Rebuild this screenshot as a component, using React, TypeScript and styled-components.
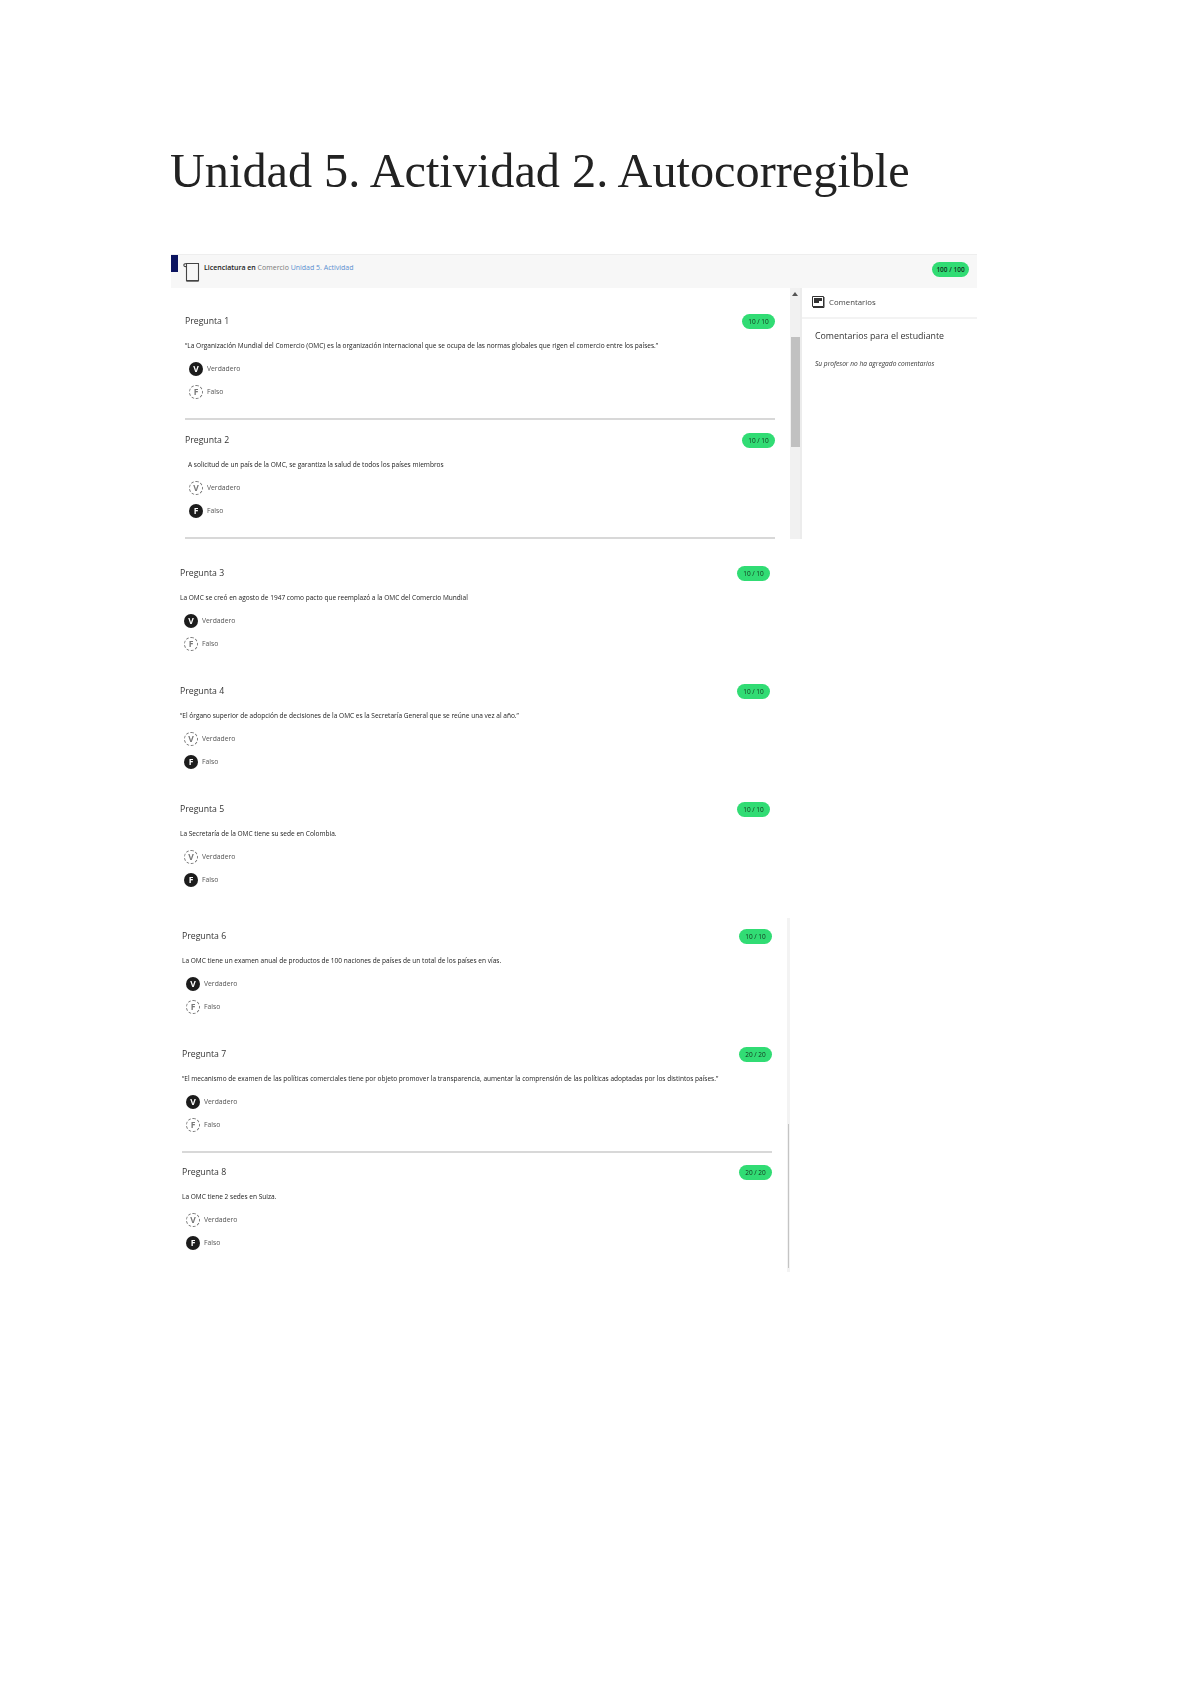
import React from 'react'
import styled, { createGlobalStyle } from 'styled-components'

const GlobalStyle = createGlobalStyle`
  body {
    margin: 0;
    background: #fff;
    font-family: 'Open Sans', 'Liberation Sans', sans-serif;
    color: #333;
  }
`

type Question = {
  name: string
  text: string
  score: string
  answer: 'V' | 'F'
  indent?: number
  ruled?: boolean
}

const firstGroup: Question[] = [
  {
    name: 'Pregunta 1',
    text: '“La Organización Mundial del Comercio (OMC) es la organización internacional que se ocupa de las normas globales que rigen el comercio entre los países.”',
    score: '10 / 10',
    answer: 'V',
    ruled: true,
  },
  {
    name: 'Pregunta 2',
    text: 'A solicitud de un país de la OMC, se garantiza la salud de todos los países miembros',
    score: '10 / 10',
    answer: 'F',
    indent: 3,
    ruled: true,
  },
]

const secondGroup: Question[] = [
  {
    name: 'Pregunta 3',
    text: 'La OMC se creó en agosto de 1947 como pacto que reemplazó a la OMC del Comercio Mundial',
    score: '10 / 10',
    answer: 'V',
  },
  {
    name: 'Pregunta 4',
    text: '“El órgano superior de adopción de decisiones de la OMC es la Secretaría General que se reúne una vez al año.”',
    score: '10 / 10',
    answer: 'F',
  },
  {
    name: 'Pregunta 5',
    text: 'La Secretaría de la OMC tiene su sede en Colombia.',
    score: '10 / 10',
    answer: 'F',
  },
]

const thirdGroup: Question[] = [
  {
    name: 'Pregunta 6',
    text: 'La OMC tiene un examen anual de productos de 100 naciones de países de un total de los países en vías.',
    score: '10 / 10',
    answer: 'V',
  },
  {
    name: 'Pregunta 7',
    text: '“El mecanismo de examen de las políticas comerciales tiene por objeto promover la transparencia, aumentar la comprensión de las políticas adoptadas por los distintos países.”',
    score: '20 / 20',
    answer: 'V',
    ruled: true,
  },
  {
    name: 'Pregunta 8',
    text: 'La OMC tiene 2 sedes en Suiza.',
    score: '20 / 20',
    answer: 'F',
  },
]

function QuestionBlock({ question }: { question: Question }) {
  return (
    <QuestionWrap>
      <QuestionHead>
        <QuestionName>{question.name}</QuestionName>
        <ScorePill>{question.score}</ScorePill>
      </QuestionHead>
      <Statement $indent={question.indent ?? 0}>{question.text}</Statement>
      <Option>
        <OptionMark $selected={question.answer === 'V'}>V</OptionMark>
        Verdadero
      </Option>
      <Option>
        <OptionMark $selected={question.answer === 'F'}>F</OptionMark>
        Falso
      </Option>
      {question.ruled && <Rule />}
    </QuestionWrap>
  )
}

export default function App() {
  return (
    <Page>
      <GlobalStyle />
      <Title>Unidad 5. Actividad 2. Autocorregible</Title>

      <Panel>
        <TopBar>
          <NavyTab />
          <DocIcon width="17" height="20" viewBox="0 0 17 20" fill="none" stroke="#444" strokeWidth="1.1">
            <path d="M3.5 1.5H16M3.5 1.5C1.5 1.5 .8 2.2 .8 3.2S2 4.6 3 4.6M3.5 1.5V18.8H15.500V1.5" />
            <path d="M3.5 18.8H15.5" strokeWidth="1.6" />
          </DocIcon>
          <Crumbs>
            <b>Licenciatura en</b> Comercio <span>Unidad 5. Actividad</span>
          </Crumbs>
          <TotalPill>100 / 100</TotalPill>
        </TopBar>
        <PanelBody>
          <Questions>
            {firstGroup.map((q) => (
              <QuestionBlock key={q.name} question={q} />
            ))}
          </Questions>
          <ScrollTrack>
            <ScrollArrow />
            <ScrollThumb />
          </ScrollTrack>
          <Side>
            <SideHead>
              <svg width="13" height="12" viewBox="0 0 13 12">
                <path d="M.5.5h11v10h-11z" fill="none" stroke="#333" />
                <path d="M2 2h8v3H7v2H2z" fill="#333" />
                <path d="M12 1v10.500H1" fill="none" stroke="#333" />
              </svg>
              Comentarios
            </SideHead>
            <SideContent>
              <SideTitle>Comentarios para el estudiante</SideTitle>
              <SideNote>Su profesor no ha agregado comentarios</SideNote>
            </SideContent>
          </Side>
        </PanelBody>
      </Panel>

      <SecondGroup>
        {secondGroup.map((q) => (
          <QuestionBlock key={q.name} question={q} />
        ))}
      </SecondGroup>

      <ThirdGroup>
        <ThirdQuestions>
          {thirdGroup.map((q) => (
            <QuestionBlock key={q.name} question={q} />
          ))}
        </ThirdQuestions>
        <ThinRail>
          <ThinThumb />
        </ThinRail>
      </ThirdGroup>
    </Page>
  )
}

const Page = styled.div`
  height: 1696px;
  overflow: hidden;
`

const Title = styled.h1`
  margin: 0;
  padding: 143px 0 0 170px;
  height: 254px;
  box-sizing: border-box;
  font: 400 48.25px/56px 'Liberation Serif', serif;
  color: #222;
  white-space: nowrap;
`

const Panel = styled.section`
  margin-left: 171px;
  width: 806px;
  filter: blur(0.45px);
`

const TopBar = styled.header`
  display: flex;
  height: 34px;
  background: #f7f7f7;
  border-top: 1px solid #eee;
  box-sizing: border-box;
`

const NavyTab = styled.div`
  width: 7px;
  height: 17px;
  background: #0b1460;
`

const DocIcon = styled.svg`
  margin: 7px 0 0 5px;
  flex: none;
`

const Crumbs = styled.div`
  margin: 8px 0 0 4px;
  font-size: 7px;
  line-height: 10px;
  color: #777;
  white-space: nowrap;

  b {
    color: #222;
    font-weight: 600;
  }

  span {
    color: #5b8fd0;
  }
`

const Pill = styled.span`
  display: flex;
  align-items: center;
  justify-content: center;
  height: 15px;
  border-radius: 8px;
  background: #31dc74;
  color: #14351f;
  font-size: 6.5px;
  white-space: nowrap;
`

const TotalPill = styled(Pill)`
  width: 37px;
  margin: 7px 8px 0 auto;
  color: #10301e;
  font-weight: 600;
`

const ScorePill = styled(Pill)`
  width: 33px;
`

const PanelBody = styled.div`
  display: flex;
  height: 251px;
  overflow: hidden;
`

const Questions = styled.div`
  width: 619px;
  box-sizing: border-box;
  padding: 25px 15px 0 14px;
  display: flex;
  flex-direction: column;
  gap: 1px;
`

const QuestionWrap = styled.article`
  display: flex;
  flex-direction: column;
  height: 118px;
  flex: none;
`

const QuestionHead = styled.div`
  display: flex;
  align-items: center;
  justify-content: space-between;
  height: 16px;
  margin-bottom: 4px;
`

const QuestionName = styled.h3`
  margin: 0;
  font-size: 8.7px;
  font-weight: 400;
  color: #333;
`

const Statement = styled.p<{ $indent: number }>`
  margin: 0;
  padding-left: ${(p) => p.$indent}px;
  height: 24px;
  display: flex;
  align-items: center;
  font-size: 6.55px;
  color: #222;
  white-space: nowrap;
`

const Option = styled.div`
  display: flex;
  align-items: center;
  gap: 4px;
  height: 23px;
  padding-left: 4px;
  font-size: 6.8px;
  color: #555;
`

const OptionMark = styled.span<{ $selected: boolean }>`
  width: 14px;
  height: 14px;
  box-sizing: border-box;
  border-radius: 50%;
  display: flex;
  align-items: center;
  justify-content: center;
  font-size: 8.5px;
  font-weight: 700;
  color: ${(p) => (p.$selected ? '#fff' : '#777')};
  background: ${(p) => (p.$selected ? '#1c1c1c' : 'transparent')};
  border: ${(p) => (p.$selected ? 'none' : '1px dashed #777')};
`

const Rule = styled.hr`
  margin: 15px 0 0;
  height: 2px;
  border: 0;
  background: #d8d8d8;
  flex: none;
`

const ScrollTrack = styled.div`
  width: 10px;
  flex: none;
  background: #f1f1f1;
  display: flex;
  flex-direction: column;
  align-items: center;
`

const ScrollArrow = styled.div`
  margin-top: 4px;
  width: 0;
  height: 0;
  border-left: 3px solid transparent;
  border-right: 3px solid transparent;
  border-bottom: 4px solid #555;
`

const ScrollThumb = styled.div`
  margin-top: 41px;
  width: 9px;
  height: 110px;
  background: #c1c1c1;
`

const Side = styled.aside`
  flex: 1;
  border-left: 2px solid #ececec;
`

const SideHead = styled.div`
  height: 31px;
  box-sizing: border-box;
  padding: 0 0 2px 10px;
  display: flex;
  align-items: center;
  gap: 4px;
  border-bottom: 2px solid #f3f3f3;
  font-size: 7.8px;
  color: #444;
`

const SideContent = styled.div`
  padding: 10px 0 0 13px;
`

const SideTitle = styled.h4`
  margin: 0 0 16px;
  font-size: 8.8px;
  line-height: 14px;
  font-weight: 400;
  color: #333;
  white-space: nowrap;
`

const SideNote = styled.p`
  margin: 0;
  font-size: 6.6px;
  line-height: 10px;
  font-style: italic;
  color: #333;
  white-space: nowrap;
`

const SecondGroup = styled.section`
  margin: 26px 0 0 180px;
  width: 590px;
  height: 353px;
  filter: blur(0.45px);
`

const ThirdGroup = styled.section`
  margin-left: 182px;
  display: flex;
  height: 354px;
  filter: blur(0.45px);
`

const ThirdQuestions = styled.div`
  width: 590px;
  padding-top: 10px;
`

const ThinRail = styled.div`
  margin-left: 15px;
  width: 3px;
  background: #f3f3f3;
  padding-top: 206px;
  box-sizing: border-box;
`

const ThinThumb = styled.div`
  margin: 0 auto;
  width: 1.5px;
  height: 144px;
  background: #c4c4c4;
`
